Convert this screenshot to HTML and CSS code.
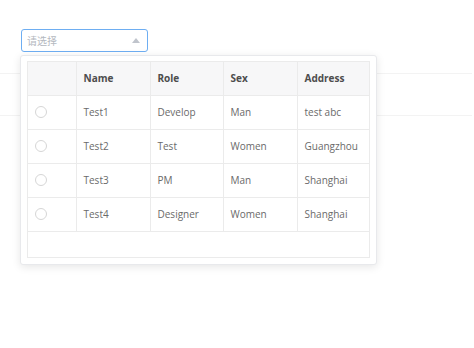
FILE: index.html
```html
<!DOCTYPE html>
<html lang="zh">
<head>
    <meta charset="UTF-8">
    <title>Table Select</title>
    <link rel="stylesheet" href="styles.css">
</head>
<body>
<div class="page">
    <div class="select-wrap">
        <div class="select-input">
            <span class="placeholder">请选择</span>
            <svg class="caret" width="8" height="5" viewBox="0 0 8 5"><path d="M0 5 L4 0 L8 5 Z" fill="#c0c4cc"/></svg>
        </div>

        <!-- 下拉表格 -->
        <div class="dropdown">
            <div class="table-box">
                <table class="grid">
                    <colgroup>
                        <col style="width:48px">
                        <col style="width:74px">
                        <col style="width:73px">
                        <col style="width:74px">
                        <col>
                    </colgroup>
                    <thead>
                    <tr>
                        <th></th>
                        <th>Name</th>
                        <th>Role</th>
                        <th>Sex</th>
                        <th>Address</th>
                    </tr>
                    </thead>
                    <tbody>
                    <tr>
                        <td><span class="radio"></span></td>
                        <td>Test1</td>
                        <td>Develop</td>
                        <td>Man</td>
                        <td>test abc</td>
                    </tr>
                    <tr>
                        <td><span class="radio"></span></td>
                        <td>Test2</td>
                        <td>Test</td>
                        <td>Women</td>
                        <td>Guangzhou</td>
                    </tr>
                    <tr>
                        <td><span class="radio"></span></td>
                        <td>Test3</td>
                        <td>PM</td>
                        <td>Man</td>
                        <td>Shanghai</td>
                    </tr>
                    <tr>
                        <td><span class="radio"></span></td>
                        <td>Test4</td>
                        <td>Designer</td>
                        <td>Women</td>
                        <td>Shanghai</td>
                    </tr>
                    </tbody>
                </table>
            </div>
        </div>
    </div>

    <div class="bg-panel"></div>
</div>
</body>
</html>
```

FILE: styles.css
```css
* {
    margin: 0;
    padding: 0;
    box-sizing: border-box;
}

html, body {
    height: 100%;
}

body {
    font-family: 'Open Sans', 'Noto Sans CJK SC', sans-serif;
    background: #ffffff;
    color: #606266;
}

.page {
    min-height: 100%;
    padding-top: 29px;
}

/* 选择框 */
.select-wrap {
    position: relative;
    margin-left: 21px;
    width: 127px;
}

.select-input {
    height: 23px;
    border: 1px solid #6eaef2;
    border-radius: 3px;
    display: flex;
    align-items: center;
    justify-content: space-between;
    padding: 0 7px 0 5px;
}

.placeholder {
    font-size: 10px;
    color: #b4b8c0;
}

.caret {
    display: block;
    margin-top: -1px;
}

/* 背景区域 */
.bg-panel {
    margin-top: 21px;
    width: 472px;
    height: 43px;
    border-top: 1px solid #f3f3f3;
    border-bottom: 1px solid #f3f3f3;
}

/* 下拉面板 */
.dropdown {
    position: absolute;
    top: 26px;
    left: -1px;
    width: 357px;
    padding: 5px 6px 6px;
    background: #ffffff;
    border: 1px solid #e8e9ec;
    border-radius: 3px;
    box-shadow: 0 2px 8px rgba(0, 0, 0, 0.1);
    z-index: 10;
}

.table-box {
    height: 197px;
    border: 1px solid #ebebeb;
}

.grid {
    width: 100%;
    border-collapse: collapse;
    table-layout: fixed;
    font-size: 10px;
}

.grid th,
.grid td {
    height: 34px;
    padding: 0 7px;
    text-align: left;
    border-bottom: 1px solid #ebebeb;
    border-right: 1px solid #ebebeb;
    white-space: nowrap;
}

.grid th:last-child,
.grid td:last-child {
    border-right: none;
}

.grid th {
    height: 33px;
    background: #f7f7f8;
    font-weight: 700;
    color: #4d4d4d;
}

.grid td {
    color: #6a6a6a;
}

.radio {
    display: block;
    width: 12px;
    height: 12px;
    border: 1px solid #d6d6d6;
    border-radius: 50%;
}
```
